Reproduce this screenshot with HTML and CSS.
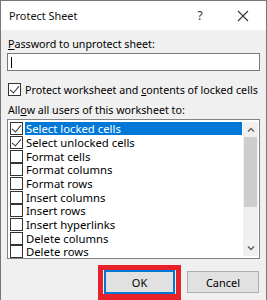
FILE: index.html
```html
<!DOCTYPE html>
<html lang="en">
<head>
    <meta charset="UTF-8">
    <title>Protect Sheet</title>
    <link rel="stylesheet" href="styles.css">
</head>
<body>
    <div class="dialog">
        <div class="title-bar">
            <span class="title">Protect Sheet</span>
            <span class="help">?</span>
            <span class="close">
                <svg width="12" height="12" viewBox="0 0 12 12"><path d="M1 1L11 11M11 1L1 11" stroke="#333" stroke-width="1.1"/></svg>
            </span>
        </div>
        <div class="content">
            <label class="label"><u>P</u>assword to unprotect sheet:</label>
            <div class="input"><span class="caret"></span></div>

            <div class="check-row">
                <span class="box checked"></span>
                <span>Protect worksheet and <u>c</u>ontents of locked cells</span>
            </div>

            <label class="label allow">All<u>o</u>w all users of this worksheet to:</label>
            <div class="list">
                <div class="items">
                    <div class="item selected"><span class="box checked"></span><span class="text">Select locked cells</span></div>
                    <div class="item"><span class="box checked"></span><span class="text">Select unlocked cells</span></div>
                    <div class="item"><span class="box"></span><span class="text">Format cells</span></div>
                    <div class="item"><span class="box"></span><span class="text">Format columns</span></div>
                    <div class="item"><span class="box"></span><span class="text">Format rows</span></div>
                    <div class="item"><span class="box"></span><span class="text">Insert columns</span></div>
                    <div class="item"><span class="box"></span><span class="text">Insert rows</span></div>
                    <div class="item"><span class="box"></span><span class="text">Insert hyperlinks</span></div>
                    <div class="item"><span class="box"></span><span class="text">Delete columns</span></div>
                    <div class="item"><span class="box"></span><span class="text">Delete rows</span></div>
                </div>
                <div class="scrollbar">
                    <svg class="arrow" width="8" height="5" viewBox="0 0 8 5"><path d="M1 4.5L4 1.5L7 4.5" fill="none" stroke="#606060" stroke-width="1.4"/></svg>
                    <div class="thumb"></div>
                    <div class="track"></div>
                    <svg class="arrow" width="8" height="5" viewBox="0 0 8 5"><path d="M1 0.5L4 3.5L7 0.5" fill="none" stroke="#606060" stroke-width="1.4"/></svg>
                </div>
            </div>

            <div class="buttons">
                <div class="highlight">
                    <button class="btn default">OK</button>
                </div>
                <button class="btn">Cancel</button>
            </div>
        </div>
    </div>
</body>
</html>
```

FILE: styles.css
```css
* {
    margin: 0;
    padding: 0;
    box-sizing: border-box;
}

body {
    font-family: 'Noto Sans', 'Open Sans', sans-serif;
    font-size: 10.7px;
    color: #000;
    background: #fff;
}

.dialog {
    width: 267px;
    height: 300px;
    border: 1px solid #777;
    border-bottom: none;
    display: flex;
    flex-direction: column;
    overflow: hidden;
}

.title-bar {
    height: 30px;
    background: #fff;
    display: flex;
    align-items: center;
    padding-left: 8px;
}

.title {
    flex: 1;
    font-size: 10.9px;
    color: #111;
}

.help {
    width: 40px;
    text-align: center;
    font-size: 12px;
    color: #333;
}

.close {
    width: 46px;
    display: flex;
    justify-content: center;
}

.content {
    flex: 1;
    background: #f0f0f0;
    padding: 6px 6px 0 6px;
    display: flex;
    flex-direction: column;
    white-space: nowrap;
}

.label {
    display: block;
    line-height: 16px;
    height: 16px;
    padding-left: 1px;
}

.input {
    margin-top: 1px;
    height: 18px;
    background: #fff;
    border: 1px solid #7a7a7a;
    padding: 3px 3px;
}

.caret {
    display: block;
    width: 1px;
    height: 11px;
    background: #000;
}

.check-row {
    margin-top: 11px;
    display: flex;
    align-items: center;
    gap: 4px;
    height: 15px;
    padding-left: 1px;
}

.allow {
    margin-top: 5px;
}

.box {
    width: 13px;
    height: 13px;
    border: 1px solid #333;
    background: #fff;
    flex: none;
    position: relative;
}

.box.checked::after {
    content: "";
    position: absolute;
    left: 3px;
    top: 0px;
    width: 4px;
    height: 8px;
    border-right: 1.3px solid #333;
    border-bottom: 1.3px solid #333;
    transform: rotate(40deg);
}

.list {
    margin-top: 1px;
    height: 140px;
    background: #fff;
    border: 1px solid #828282;
    display: flex;
    padding: 2px 1px 2px 2px;
}

.items {
    flex: 1;
}

.item {
    display: flex;
    align-items: center;
    height: 13.67px;
    gap: 2px;
}

.item .text {
    flex: 1;
    height: 13px;
    line-height: 13px;
    padding-left: 1px;
    font-size: 11.3px;
}

.item.selected .text {
    background: #0078d7;
    color: #fff;
}

.scrollbar {
    width: 15px;
    margin-left: 1px;
    display: flex;
    flex-direction: column;
    align-items: center;
    background: #f0f0f0;
}

.arrow {
    margin: 5px 0;
    flex: none;
}

.thumb {
    width: 13px;
    height: 70px;
    background: #cdcdcd;
}

.track {
    flex: 1;
}

.buttons {
    display: flex;
    justify-content: flex-end;
    align-items: flex-start;
    gap: 6px;
    margin-top: 6px;
    padding-right: 1px;
}

.highlight {
    border: 5px solid #e8202a;
    border-bottom-width: 6px;
    padding: 0 1px;
}

.btn {
    width: 72px;
    height: 22px;
    font-family: inherit;
    font-size: 11px;
    background: #e1e1e1;
    border: 1px solid #adadad;
    color: #000;
}

.highlight .btn {
    height: 24px;
    width: 71px;
}

.buttons > .btn {
    margin-top: 6px;
}

.btn.default {
    border: 2px solid #0078d7;
}
```
